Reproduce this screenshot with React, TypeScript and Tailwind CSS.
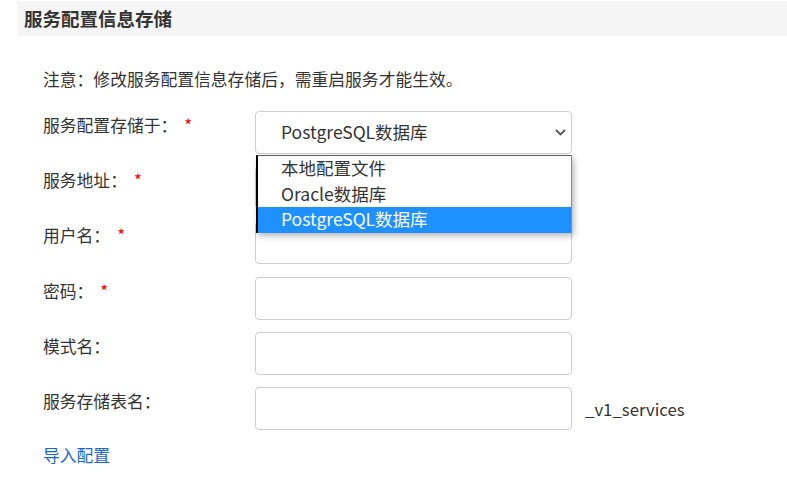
import React from 'react';

const FONT = { fontFamily: '"Noto Sans CJK SC", "Noto Sans", sans-serif' };

type Row = { label: string; required?: boolean; suffix?: string; select?: boolean };

const ROWS: Row[] = [
  { label: '服务配置存储于：', required: true, select: true },
  { label: '服务地址：', required: true },
  { label: '用户名：', required: true },
  { label: '密码：', required: true },
  { label: '模式名：' },
  { label: '服务存储表名：', suffix: '_v1_services' },
];

const OPTIONS = ['本地配置文件', 'Oracle数据库', 'PostgreSQL数据库'];

const App: React.FC = () => {
  return (
    <div className="min-h-screen bg-white pl-[17px] pt-px text-[#333]" style={FONT}>
      {/* Section header */}
      <div className="h-[35px] bg-[#f5f5f5] pl-[7px] flex items-center">
        <h2 className="text-[18.5px] font-bold text-[#333] leading-none">服务配置信息存储</h2>
      </div>

      <div className="pl-[26px]">
        <p className="mt-[31px] text-[16.8px] leading-[24px] text-[#333]">
          注意：修改服务配置信息存储后，需重启服务才能生效。
        </p>

        {/* Form rows */}
        <div className="mt-[20px] flex flex-col gap-[12.2px]">
          {ROWS.map((row) => (
            <div key={row.label} className="flex items-start">
              <div className="w-[212px] pt-[2px] text-[16.8px] leading-[24px] whitespace-nowrap">
                {row.label}
                {row.required && <span className="ml-[7px] text-[#ff0000]">*</span>}
              </div>
              {row.select ? (
                <div className="relative">
                  <div className="w-[317px] h-[43px] rounded-[4px] border border-[#cfcfcf] bg-white flex items-center pl-[25px] pr-[5px] text-[17.5px] text-[#333]">
                    <span className="flex-1">PostgreSQL数据库</span>
                    <svg width="11" height="7" viewBox="0 0 11 7">
                      <path d="M1 1l4.5 4.5L10 1" fill="none" stroke="#555" strokeWidth="1.8" />
                    </svg>
                  </div>
                  {/* Open dropdown list */}
                  <div className="absolute left-px top-[44px] z-10 w-[316px] bg-white border-t border-r border-t-[#5f5f5f] border-r-[#8a8a8a] border-l-2 border-l-black shadow-[2px_3px_6px_rgba(0,0,0,0.28)]">
                    {OPTIONS.map((opt, i) => (
                      <div
                        key={opt}
                        className={`h-[25.5px] pl-[23px] pb-[2px] flex items-center text-[17.5px] leading-none ${
                          i === 2 ? 'bg-[#1e90ff] text-white' : 'text-[#333]'
                        }`}
                      >
                        {opt}
                      </div>
                    ))}
                  </div>
                </div>
              ) : (
                <input
                  className="w-[317px] h-[43px] rounded-[4px] border border-[#cfcfcf] bg-white outline-none"
                  type={row.label === '密码：' ? 'password' : 'text'}
                />
              )}
              {row.suffix && (
                <span className="ml-[13px] self-center pt-[2px] text-[16.8px] leading-[24px] text-[#333]">
                  {row.suffix}
                </span>
              )}
            </div>
          ))}
        </div>

        <a href="#" className="mt-[13px] block w-fit text-[16.8px] leading-[24px] text-[#1a66cc]">
          导入配置
        </a>
      </div>
    </div>
  );
};

export default App;
